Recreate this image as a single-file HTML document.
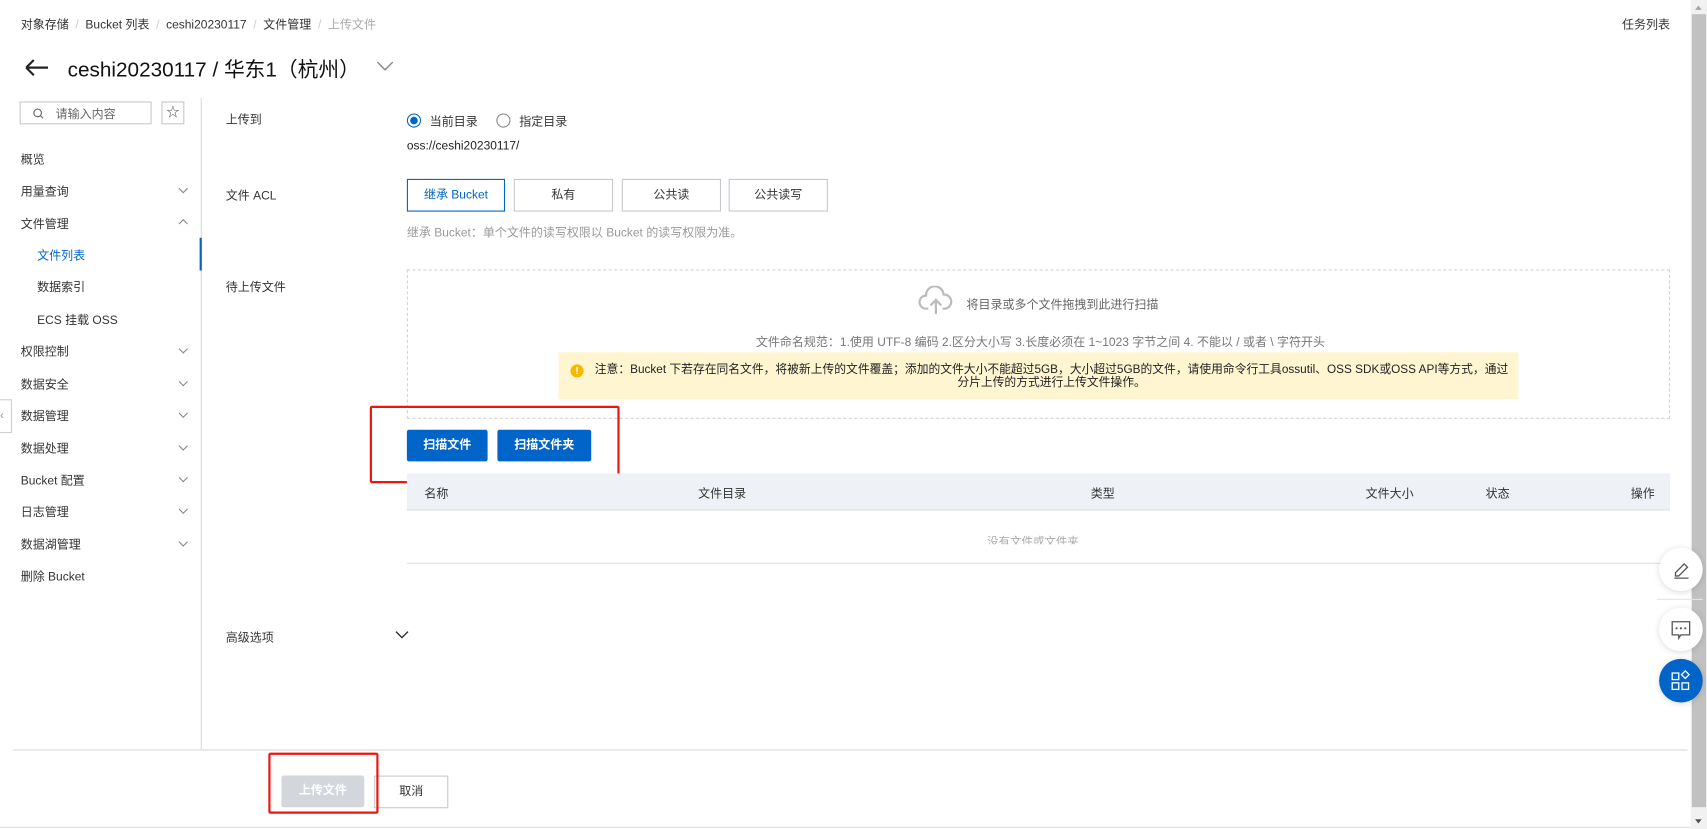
<!DOCTYPE html>
<html><head><meta charset="utf-8"><style>
html,body{margin:0;padding:0;background:#fff;overflow:hidden;width:1707px;height:829px}
#w{position:absolute;left:0;top:0;width:1565px;height:760px;transform:scale(1.0908);transform-origin:0 0;font-family:"Liberation Sans","Noto Sans CJK SC",sans-serif;font-size:11px;color:#333}
.a{position:absolute;white-space:nowrap}
.side .a{left:19px;font-size:11px;color:#333}
.chev{position:absolute;left:165px;width:5px;height:5px;border-right:1px solid #888;border-bottom:1px solid #888;transform:rotate(45deg)}
.btn{position:absolute;border:1px solid #c5c8ce;background:#fff;text-align:center;box-sizing:border-box;font-size:11px}
.pb{position:absolute;background:#0064c8;color:#fff;font-weight:bold;text-align:center;border-radius:2px;font-size:11px;line-height:29px;height:29px}
.red{position:absolute;border:2px solid #f0140e;border-radius:2px;box-sizing:border-box}
.fab{position:absolute;left:1521px;width:40px;height:40px;border-radius:50%;background:#fff;box-shadow:0 1px 6px rgba(0,0,0,.15)}
.th{position:absolute;top:444px;font-size:11px;color:#333}
</style></head><body><div id="w">
<div class="a" style="left:19px;top:14px;color:#333">对象存储 <span style="color:#ccc">&nbsp;/&nbsp;</span> Bucket 列表 <span style="color:#ccc">&nbsp;/&nbsp;</span> ceshi20230117 <span style="color:#ccc">&nbsp;/&nbsp;</span> 文件管理 <span style="color:#ccc">&nbsp;/&nbsp;</span> <span style="color:#aaa">上传文件</span></div>
<div class="a" style="left:1487px;top:14px">任务列表</div>
<svg class="a" style="left:22px;top:53px" width="24" height="18"><path d="M2 9H22M2 9L9 2M2 9L9 16" stroke="#222" stroke-width="2" fill="none"/></svg>
<div class="a" style="left:62px;top:49px;font-size:19px;color:#111">ceshi20230117 / 华东1（杭州）</div>
<svg class="a" style="left:345px;top:56px" width="16" height="10"><path d="M1 1L8 8L15 1" stroke="#888" stroke-width="1.3" fill="none"/></svg>
<div class="a" style="left:18px;top:93px;width:121px;height:21px;border:1px solid #c5c8ce;box-sizing:border-box"></div>
<svg class="a" style="left:30px;top:99px" width="10" height="10"><circle cx="4.5" cy="4.5" r="3.5" stroke="#666" fill="none"/><path d="M7 7L9.5 9.5" stroke="#666"/></svg>
<div class="a" style="left:51px;top:96px;color:#666">请输入内容</div>
<div class="a" style="left:148px;top:93px;width:21px;height:21px;border:1px solid #c5c8ce;box-sizing:border-box;text-align:center;line-height:19px;font-size:12px;color:#555">☆</div>
<div class="side">
<div class="a" style="top:138px">概览</div>
<div class="a" style="top:167px">用量查询</div><div class="chev" style="top:170px"></div>
<div class="a" style="top:197px">文件管理</div><div class="chev" style="top:202px;transform:rotate(225deg)"></div>
<div class="a" style="left:34px;top:226px;color:#0064c8">文件列表</div>
<div class="a" style="left:34px;top:255px">数据索引</div>
<div class="a" style="left:34px;top:285px">ECS 挂载 OSS</div>
<div class="a" style="top:314px">权限控制</div><div class="chev" style="top:317px"></div>
<div class="a" style="top:344px">数据安全</div><div class="chev" style="top:347px"></div>
<div class="a" style="top:373px">数据管理</div><div class="chev" style="top:376px"></div>
<div class="a" style="top:403px">数据处理</div><div class="chev" style="top:406px"></div>
<div class="a" style="top:432px">Bucket 配置</div><div class="chev" style="top:435px"></div>
<div class="a" style="top:461px">日志管理</div><div class="chev" style="top:464px"></div>
<div class="a" style="top:491px">数据湖管理</div><div class="chev" style="top:494px"></div>
<div class="a" style="top:520px">删除 Bucket</div>
</div>
<div class="a" style="left:184px;top:90px;width:1px;height:597px;background:#d8d8d8"></div>
<div class="a" style="left:183px;top:218px;width:2px;height:30px;background:#0064c8"></div>
<div class="a" style="left:0;top:366px;width:11px;height:31px;border:1px solid #d0d0d0;border-left:none;box-sizing:border-box;background:#fff;color:#999;font-size:11px;line-height:29px">‹</div>
<div class="a" style="left:207px;top:101px">上传到</div>
<div class="a" style="left:373px;top:104px;width:13px;height:13px;border:1px solid #0064c8;border-radius:50%;box-sizing:border-box"></div>
<div class="a" style="left:376px;top:107px;width:7px;height:7px;border-radius:50%;background:#0064c8"></div>
<div class="a" style="left:394px;top:103px">当前目录</div>
<div class="a" style="left:455px;top:104px;width:13px;height:13px;border:1px solid #888;border-radius:50%;box-sizing:border-box"></div>
<div class="a" style="left:476px;top:103px">指定目录</div>
<div class="a" style="left:373px;top:128px;color:#222">oss://ceshi20230117/</div>
<div class="a" style="left:207px;top:171px">文件 ACL</div>
<div class="btn" style="left:373px;top:164px;width:90px;height:30px;line-height:28px;border-color:#0064c8;color:#0064c8">继承 Bucket</div>
<div class="btn" style="left:471px;top:164px;width:91px;height:30px;line-height:28px">私有</div>
<div class="btn" style="left:570px;top:164px;width:91px;height:30px;line-height:28px">公共读</div>
<div class="btn" style="left:668px;top:164px;width:91px;height:30px;line-height:28px">公共读写</div>
<div class="a" style="left:373px;top:205px;color:#999">继承 Bucket：单个文件的读写权限以 Bucket 的读写权限为准。</div>
<div class="a" style="left:207px;top:255px">待上传文件</div>
<div class="a" style="left:373px;top:247px;width:1158px;height:137px;border:1px dashed #d5d5d5;box-sizing:border-box"></div>
<svg class="a" style="left:842px;top:262px" width="32" height="28"><path d="M9 21H7A6 6 0 0 1 7 9A8 8 0 0 1 23 8A6.5 6.5 0 0 1 24 21H22" stroke="#bbb" stroke-width="2" fill="none"/><path d="M16 26V13M11 18L16 13L21 18" stroke="#bbb" stroke-width="2" fill="none"/></svg>
<div class="a" style="left:886px;top:271px;color:#666">将目录或多个文件拖拽到此进行扫描</div>
<div class="a" style="left:693px;top:305px;color:#777">文件命名规范：1.使用 UTF-8 编码 2.区分大小写 3.长度必须在 1~1023 字节之间 4. 不能以 / 或者 \ 字符开头</div>
<div class="a" style="left:512px;top:323px;width:880px;height:43px;background:#fff5d1"></div>
<div class="a" style="left:523px;top:334px;width:12px;height:12px;border-radius:50%;background:#f5b800;color:#fff;font-size:9px;text-align:center;line-height:12px;font-weight:bold">!</div>
<div class="a" style="left:538px;top:333px;width:852px;text-align:center;line-height:12px;color:#222;font-size:10.8px">注意：Bucket 下若存在同名文件，将被新上传的文件覆盖；添加的文件大小不能超过5GB，大小超过5GB的文件，请使用命令行工具ossutil、OSS SDK或OSS API等方式，通过<br>分片上传的方式进行上传文件操作。</div>
<div class="pb" style="left:373px;top:394px;width:74px">扫描文件</div>
<div class="pb" style="left:456px;top:394px;width:86px">扫描文件夹</div>
<div class="red" style="left:339px;top:372px;width:229px;height:71px"></div>
<div class="a" style="left:373px;top:434px;width:1158px;height:33px;background:#eef1f6;border-bottom:1px solid #e0e0e0"></div>
<div class="th" style="left:389px">名称</div>
<div class="th" style="left:640px">文件目录</div>
<div class="th" style="left:1000px">类型</div>
<div class="th" style="left:1252px">文件大小</div>
<div class="th" style="left:1362px">状态</div>
<div class="th" style="left:1495px">操作</div>
<div class="a" style="left:905px;top:490px;height:9px;overflow:hidden;color:#aaa;font-size:10.5px;line-height:14px">没有文件或文件夹</div>
<div class="a" style="left:373px;top:516px;width:1158px;height:1px;background:#e0e0e0"></div>
<div class="a" style="left:207px;top:576px">高级选项</div>
<svg class="a" style="left:362px;top:578px" width="13" height="8"><path d="M1 1L6.5 6.5L12 1" stroke="#333" stroke-width="1.3" fill="none"/></svg>
<div class="a" style="left:12px;top:687px;width:1535px;height:1px;background:#d8d8d8"></div>
<div class="a" style="left:258px;top:711px;width:76px;height:29px;background:#d3d6db;color:#fff;font-weight:bold;text-align:center;line-height:29px;border-radius:2px">上传文件</div>
<div class="btn" style="left:343px;top:711px;width:68px;height:30px;line-height:28px">取消</div>
<div class="red" style="left:246px;top:690px;width:101px;height:56px"></div>
<div class="a" style="left:0;top:758px;width:1550px;height:1px;background:#ddd"></div>
<div class="a" style="left:1550px;top:0;width:15px;height:760px;background:#f1f1f1"></div>
<div class="a" style="left:1551px;top:13px;width:13px;height:727px;background:#c1c1c1"></div>
<div class="a" style="left:1554px;top:5px;width:0;height:0;border-left:3px solid transparent;border-right:3px solid transparent;border-bottom:4px solid #a3a3a3"></div>
<div class="a" style="left:1554px;top:751px;width:0;height:0;border-left:3px solid transparent;border-right:3px solid transparent;border-top:4px solid #505050"></div>
<div class="fab" style="top:502px"><svg width="40" height="40"><path d="M15 23L23 15L26 18L18 26H15Z" stroke="#555" stroke-width="1.2" fill="none"/><path d="M14 28H27" stroke="#555" stroke-width="1.2"/></svg></div>
<div class="a" style="left:1519px;top:549px;width:42px;height:1px;background:#e5e5e5"></div>
<div class="fab" style="top:557px"><svg width="40" height="40"><path d="M12 13H28V25H20L18 28V25H12Z" stroke="#555" stroke-width="1.2" fill="none"/><circle cx="16" cy="19" r="1" fill="#555"/><circle cx="20" cy="19" r="1" fill="#555"/><circle cx="24" cy="19" r="1" fill="#555"/></svg></div>
<div class="fab" style="top:604px;background:#0064c8"><svg width="40" height="40"><g stroke="#fff" stroke-width="1.2" fill="none"><rect x="12" y="13" width="6" height="6"/><rect x="12" y="22" width="6" height="6"/><rect x="21" y="22" width="6" height="6"/><path d="M24 11L27.5 14.5L24 18L20.5 14.5Z"/></g></svg></div>
</div></body></html>
